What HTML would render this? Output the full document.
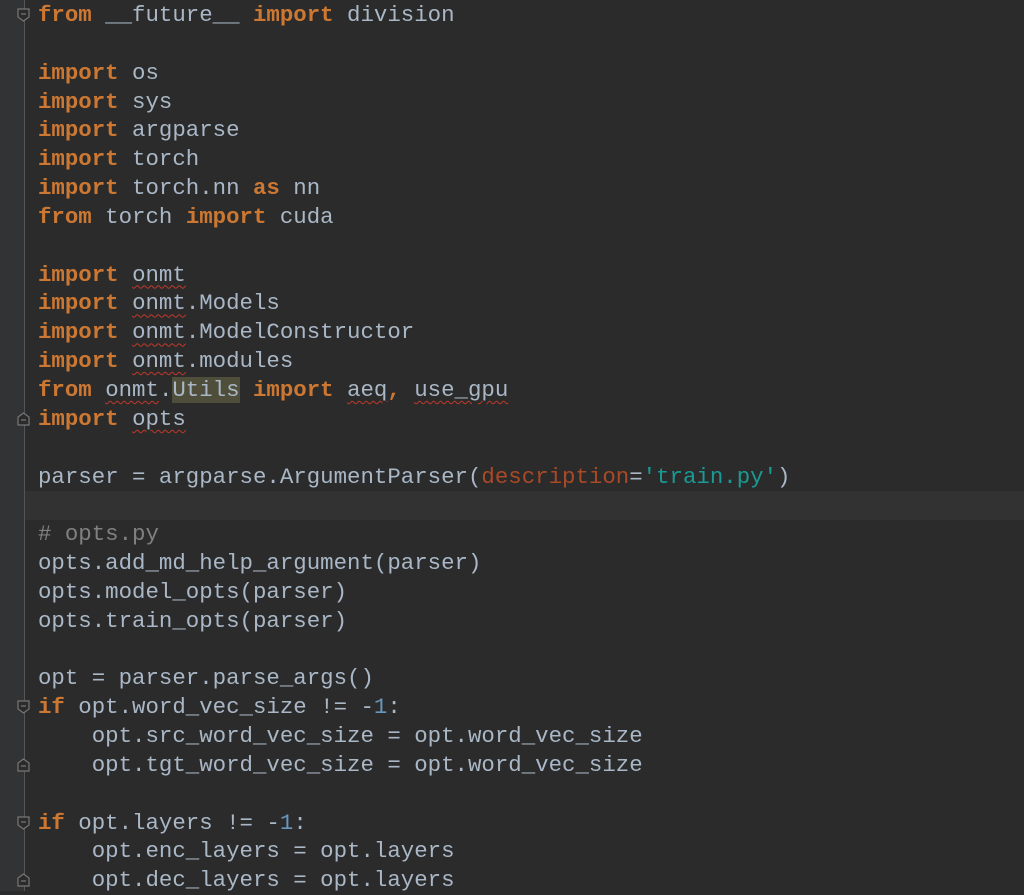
<!DOCTYPE html>
<html><head><style>
html,body{margin:0;padding:0;width:1024px;height:891px;overflow:hidden;background:#2b2b2b}
.g{position:absolute;left:0;top:0;width:25px;height:891px;background:#313335}
.gl{position:absolute;left:24px;top:0;width:1px;height:891px;background:#555}
.cur{position:absolute;left:25px;top:491px;width:999px;height:29px;background:#323232}
pre{position:absolute;left:38px;top:1px;margin:0;font-family:"Liberation Mono",monospace;font-size:22.4px;line-height:28.85px;color:#a9b7c6;font-weight:normal}
.k{color:#cc7832;font-weight:bold}
.s{color:#1a9a94}
.p{color:#aa4926}
.n{color:#6897bb}
.c{color:#808080}
.w{text-decoration:underline wavy #c0392b;text-underline-offset:4px;text-decoration-thickness:1px}
.h{background:#4f4e3a}
.f{position:absolute;left:17px;width:13px;height:14px}
</style></head><body>
<div class="g"></div><div class="gl"></div><div class="cur"></div>
<svg class="f" style="top:8px" viewBox="0 0 13 14"><path d="M1 1H12V9L6.5 13L1 9Z" fill="#2b2b2b" stroke="#777" stroke-width="1.2"/><path d="M4 6H9" stroke="#888"/></svg>
<svg class="f" style="top:412px" viewBox="0 0 13 14"><path d="M1 13H12V5L6.5 1L1 5Z" fill="#2b2b2b" stroke="#777" stroke-width="1.2"/><path d="M4 8H9" stroke="#888"/></svg>
<svg class="f" style="top:700px" viewBox="0 0 13 14"><path d="M1 1H12V9L6.5 13L1 9Z" fill="#2b2b2b" stroke="#777" stroke-width="1.2"/><path d="M4 6H9" stroke="#888"/></svg>
<svg class="f" style="top:758px" viewBox="0 0 13 14"><path d="M1 13H12V5L6.5 1L1 5Z" fill="#2b2b2b" stroke="#777" stroke-width="1.2"/><path d="M4 8H9" stroke="#888"/></svg>
<svg class="f" style="top:816px" viewBox="0 0 13 14"><path d="M1 1H12V9L6.5 13L1 9Z" fill="#2b2b2b" stroke="#777" stroke-width="1.2"/><path d="M4 6H9" stroke="#888"/></svg>
<svg class="f" style="top:873px" viewBox="0 0 13 14"><path d="M1 13H12V5L6.5 1L1 5Z" fill="#2b2b2b" stroke="#777" stroke-width="1.2"/><path d="M4 8H9" stroke="#888"/></svg>
<pre><span class="k">from</span> __future__ <span class="k">import</span> division

<span class="k">import</span> os
<span class="k">import</span> sys
<span class="k">import</span> argparse
<span class="k">import</span> torch
<span class="k">import</span> torch.nn <span class="k">as</span> nn
<span class="k">from</span> torch <span class="k">import</span> cuda

<span class="k">import</span> <span class="w">onmt</span>
<span class="k">import</span> <span class="w">onmt</span>.Models
<span class="k">import</span> <span class="w">onmt</span>.ModelConstructor
<span class="k">import</span> <span class="w">onmt</span>.modules
<span class="k">from</span> <span class="w">onmt</span>.<span class="h">Utils</span> <span class="k">import</span> <span class="w">aeq</span><span class="k">,</span> <span class="w">use_gpu</span>
<span class="k">import</span> <span class="w">opts</span>

parser = argparse.ArgumentParser(<span class="p">description</span>=<span class="s">'train.py'</span>)

<span class="c"># opts.py</span>
opts.add_md_help_argument(parser)
opts.model_opts(parser)
opts.train_opts(parser)

opt = parser.parse_args()
<span class="k">if</span> opt.word_vec_size != -<span class="n">1</span>:
    opt.src_word_vec_size = opt.word_vec_size
    opt.tgt_word_vec_size = opt.word_vec_size

<span class="k">if</span> opt.layers != -<span class="n">1</span>:
    opt.enc_layers = opt.layers
    opt.dec_layers = opt.layers
</pre>
</body></html>
